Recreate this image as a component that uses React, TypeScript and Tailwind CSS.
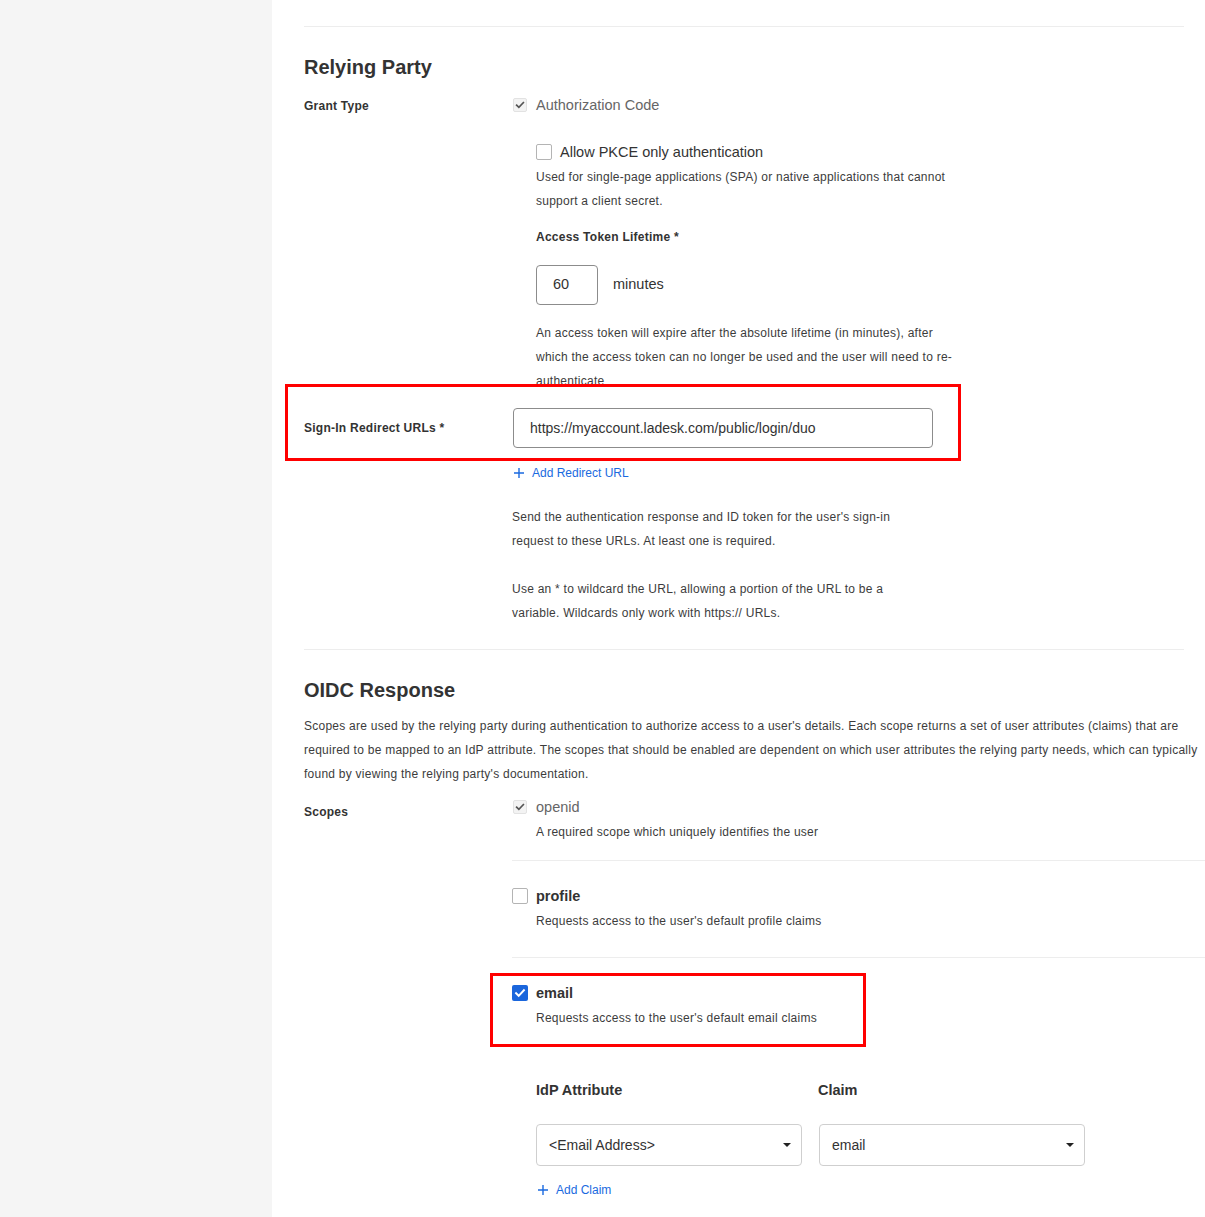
import React from "react";

// small helpers for the form controls
function CheckMark({ color }: { color: string }) {
  return (
    <svg viewBox="0 0 16 16" className="h-full w-full" fill="none">
      <path d="M3.5 8.2l3 3 6-6.4" stroke={color} strokeWidth="2.2" strokeLinecap="square" />
    </svg>
  );
}

function Checkbox({ state }: { state: "disabled" | "off" | "on" }) {
  if (state === "disabled") {
    return (
      <span className="ml-[1px] flex h-[14px] w-[14px] shrink-0 items-center justify-center rounded-[2px] border border-[#e2e2e2] bg-[#f3f3f3]">
        <CheckMark color="#555" />
      </span>
    );
  }
  if (state === "on") {
    return (
      <span className="flex h-[16px] w-[16px] shrink-0 items-center justify-center rounded-[2px] bg-[#1a66dc] p-[1px]">
        <CheckMark color="#fff" />
      </span>
    );
  }
  return <span className="h-[16px] w-[16px] shrink-0 rounded-[2px] border border-[#b4b4b4] bg-white" />;
}

function Plus() {
  return (
    <svg viewBox="0 0 10 10" className="h-[10px] w-[10px]" fill="none">
      <path d="M5 0v10M0 5h10" stroke="#1a6ae0" strokeWidth="1.4" />
    </svg>
  );
}

function Select({ value }: { value: string }) {
  return (
    <div className="flex h-[42px] items-center justify-between rounded-[4px] border border-[#cfcfcf] bg-white pl-[12px] pr-[10px] text-[14px] text-[#333]">
      <span>{value}</span>
      <svg viewBox="0 0 8 4" className="h-[4px] w-[8px]">
        <path d="M0 0h8L4 4z" fill="#222" />
      </svg>
    </div>
  );
}

const label = "w-[208px] shrink-0 text-[12px] font-bold leading-[20px] tracking-[0.25px] text-[#333]";
const help = "text-[12px] leading-[24px] tracking-[0.25px] text-[#3c3c3c] whitespace-nowrap";

export default function App() {
  return (
    <div className="relative flex min-h-[1217px] bg-white font-['Liberation_Sans',Arial,sans-serif] text-[#333]">
      <aside className="w-[272px] shrink-0 bg-[#f5f5f5]" />

      <main className="min-w-0 flex-1 pl-[32px] pr-[21px] pt-[26px]">
        {/* Relying Party */}
        <section className="border-t border-[#ededed]">
          <h2 className="mt-[26px] text-[20px] font-bold leading-[28px] text-[#333]">Relying Party</h2>

          <div className="mt-[14px] flex">
            <div className={`${label} pt-[1px]`}>Grant Type</div>
            <div>
              <div className="flex h-[20px] items-center gap-[9px]">
                <Checkbox state="disabled" />
                <span className="pt-[2px] text-[14.5px] text-[#666]">Authorization Code</span>
              </div>

              <div className="ml-[24px]">
                <div className="mt-[27px] flex h-[20px] items-center gap-[8px]">
                  <Checkbox state="off" />
                  <span className="pt-[2px] text-[14.5px] text-[#333]">Allow PKCE only authentication</span>
                </div>
                <p className={`mt-[3px] ${help}`}>
                  Used for single-page applications (SPA) or native applications that cannot
                  <br />
                  support a client secret.
                </p>

                <div className="mt-[12px] text-[12px] font-bold leading-[24px] tracking-[0.25px]">
                  Access Token Lifetime *
                </div>
                <div className="mt-[16px] flex items-center">
                  <div className="flex h-[40px] w-[62px] items-center rounded-[4px] border border-[#8c8c8c] px-[16px] text-[14.5px]">
                    60
                  </div>
                  <span className="ml-[15px] text-[14.5px]">minutes</span>
                </div>
                <p className={`mt-[16px] ${help}`}>
                  An access token will expire after the absolute lifetime (in minutes), after
                  <br />
                  which the access token can no longer be used and the user will need to re-
                  <br />
                  authenticate
                </p>
              </div>
            </div>
          </div>

          <div className="mt-[15px] flex items-center">
            <div className={label}>Sign-In Redirect URLs *</div>
            <div className="ml-[1px] flex h-[40px] w-[420px] items-center rounded-[4px] border border-[#8c8c8c] px-[16px] text-[14px]">
              https://myaccount.ladesk.com/public/login/duo
            </div>
          </div>

          <div className="ml-[208px]">
            <div className="ml-[2px] mt-[15px] flex h-[20px] items-center gap-[8px] text-[12px] text-[#1a6ae0]">
              <Plus />
              <span>Add Redirect URL</span>
            </div>
            <p className={`mt-[22px] ${help}`}>
              Send the authentication response and ID token for the user's sign-in
              <br />
              request to these URLs. At least one is required.
            </p>
            <p className={`mt-[24px] ${help}`}>
              Use an * to wildcard the URL, allowing a portion of the URL to be a
              <br />
              variable. Wildcards only work with https:// URLs.
            </p>
          </div>
        </section>

        {/* OIDC Response */}
        <section className="mt-[24px] border-t border-[#ededed]">
          <h2 className="mt-[26px] text-[20px] font-bold leading-[28px] text-[#333]">OIDC Response</h2>
          <p className={`mt-[10px] ${help}`}>
            Scopes are used by the relying party during authentication to authorize access to a user's details. Each scope returns a set of user attributes (claims) that are
            <br />
            required to be mapped to an IdP attribute. The scopes that should be enabled are dependent on which user attributes the relying party needs, which can typically
            <br />
            found by viewing the relying party's documentation.
          </p>

          <div className="mt-[11px] flex">
            <div className={`${label} pt-[5px]`}>Scopes</div>
            <div className="-mr-[21px] flex-1">
              <div className="flex h-[20px] items-center gap-[9px]">
                <Checkbox state="disabled" />
                <span className="pt-[2px] text-[14.5px] text-[#666]">openid</span>
              </div>
              <p className={`ml-[24px] mt-[3px] ${help}`}>A required scope which uniquely identifies the user</p>

              <div className="mt-[16px] border-t border-[#ededed]" />

              <div className="mt-[25px] flex h-[20px] items-center gap-[8px]">
                <Checkbox state="off" />
                <span className="pt-[2px] text-[14.5px] font-bold">profile</span>
              </div>
              <p className={`ml-[24px] mt-[3px] ${help}`}>Requests access to the user's default profile claims</p>

              <div className="mt-[24px] border-t border-[#ededed]" />

              <div className="mt-[25px] flex h-[20px] items-center gap-[8px]">
                <Checkbox state="on" />
                <span className="pt-[2px] text-[14.5px] font-bold">email</span>
              </div>
              <p className={`ml-[24px] mt-[3px] ${help}`}>Requests access to the user's default email claims</p>

              <div className="ml-[24px] mt-[50px] w-[549px]">
                <div className="grid grid-cols-2 gap-x-[17px] text-[14.5px] font-bold leading-[20px]">
                  <span>IdP Attribute</span>
                  <span className="-ml-[1px]">Claim</span>
                </div>
                <div className="mt-[24px] grid grid-cols-2 gap-x-[17px]">
                  <Select value="<Email Address>" />
                  <Select value="email" />
                </div>
                <div className="ml-[2px] mt-[14px] flex h-[20px] items-center gap-[8px] text-[12px] text-[#1a6ae0]">
                  <Plus />
                  <span>Add Claim</span>
                </div>
              </div>
            </div>
          </div>
        </section>
      </main>

      {/* red annotation boxes */}
      <div className="pointer-events-none absolute left-[285px] top-[384px] h-[77px] w-[676px] border-[3px] border-[#f00]" />
      <div className="pointer-events-none absolute left-[490px] top-[973px] h-[74px] w-[376px] border-[3px] border-[#f00]" />
    </div>
  );
}
